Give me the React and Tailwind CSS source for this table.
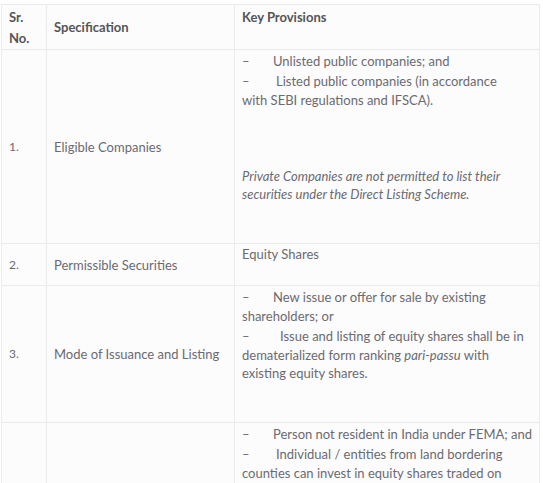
import React from "react";

const Dash = ({ gap = 31 }) => (
  <span className="inline-block leading-[20px]" style={{ width: gap }}>
    –
  </span>
);

const rows = [
  {
    no: "1.",
    spec: "Eligible Companies",
    body: (
      <div className="pb-[40px]">
        <p>
          <Dash gap={31} />
          Unlisted public companies; and
        </p>
        <p>
          <Dash gap={34} />
          Listed public companies (in accordance
          <br />
          with SEBI regulations and IFSCA).
        </p>
        <p className="mt-[58px] italic">
          Private Companies are not permitted to list their securities under
          the Direct Listing Scheme.
        </p>
      </div>
    ),
  },
  {
    no: "2.",
    spec: "Permissible Securities",
    body: (
      <div className="pb-[22px]">
        <p>Equity Shares</p>
      </div>
    ),
  },
  {
    no: "3.",
    spec: "Mode of Issuance and Listing",
    body: (
      <div className="pb-[40px]">
        <p>
          <Dash gap={31} />
          New issue or offer for sale by existing
          <br />
          shareholders; or
        </p>
        <p className="pt-[1px]">
          <Dash gap={38} />
          Issue and listing of equity shares shall be in
          <br />
          dematerialized form ranking <em>pari-passu</em> with
          <br />
          existing equity shares.
        </p>
      </div>
    ),
  },
  {
    no: "4.",
    spec: "Eligible Investors",
    body: (
      <div className="pb-[40px]">
        <p className="whitespace-nowrap">
          <Dash gap={31} />
          Person not resident in India under FEMA; and
        </p>
        <p>
          <Dash gap={34} />
          Individual / entities from land bordering
          <br />
          counties can invest in equity shares traded on
          <br />
          IFSC exchanges only with prior Government approval.
        </p>
      </div>
    ),
  },
];

export default function App() {
  return (
    <div
      className="min-h-screen bg-white pt-[4px] pl-[1px]"
      style={{ fontFamily: "Lato, 'Open Sans', sans-serif" }}
    >
      <table className="w-[538px] table-fixed border-collapse bg-[#fcfcfc] text-[13px] leading-[18px] text-[#6b6a70]">
        <colgroup>
          <col className="w-[45px]" />
          <col className="w-[188px]" />
          <col className="w-[305px]" />
        </colgroup>
        <thead>
          <tr className="h-[45px] font-bold text-[#555] leading-[21px]">
            <td className="border border-[#ebebeb] px-[7px] pt-[2px] pb-0 align-middle">
              Sr.
              <br />
              No.
            </td>
            <td className="border border-[#ebebeb] px-[7px] align-middle">
              Specification
            </td>
            <td className="border border-[#ebebeb] pl-[7px] pr-[4px] pt-[2px] align-top">
              Key Provisions
            </td>
          </tr>
        </thead>
        <tbody>
          {rows.map((r) => (
            <tr key={r.no}>
              <td className="border border-[#ebebeb] px-[7px] align-middle text-[12px]">
                {r.no}
              </td>
              <td className="border border-[#ebebeb] px-[7px] align-middle">
                {r.spec}
              </td>
              <td className="border border-[#ebebeb] pl-[7px] pr-[4px] pt-[1px] align-top">
                {r.body}
              </td>
            </tr>
          ))}
        </tbody>
      </table>
    </div>
  );
}
